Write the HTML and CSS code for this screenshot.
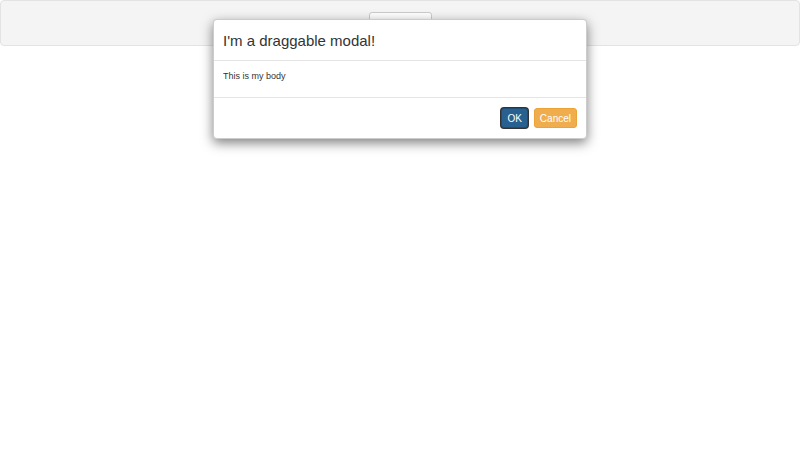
FILE: index.html
```html
<!DOCTYPE html>
<html lang="en">
<head>
    <meta charset="UTF-8">
    <meta name="viewport" content="width=device-width, initial-scale=1.0">
    <title>Draggable modal</title>
    <link rel="stylesheet" href="styles.css">
</head>
<body>
    <div class="navbar">
        <button type="button" class="btn-open">Open</button>
    </div>

    <div class="modal" id="modal">
        <div class="modal-header">
            <h4 class="modal-title">I'm a draggable modal!</h4>
        </div>
        <div class="modal-body">
            <p>This is my body</p>
        </div>
        <div class="modal-footer">
            <button type="button" class="btn btn-primary">OK</button>
            <button type="button" class="btn btn-warning">Cancel</button>
        </div>
    </div>
</body>
</html>
```

FILE: styles.css
```css
* {
    box-sizing: border-box;
}

body {
    margin: 0;
    font-family: "Liberation Sans", Arial, sans-serif;
    font-size: 11px;
    line-height: 1.42857;
    color: #333;
    background: #fff;
}

.navbar {
    height: 46px;
    background-color: #f4f4f4;
    border: 1px solid #e3e3e3;
    border-radius: 4px;
    display: flex;
    justify-content: center;
    padding-top: 11px;
}

.btn-open {
    width: 63px;
    height: 30px;
    background: #fff;
    border: 1px solid #ccc;
    border-radius: 3px;
    color: #fff;
    font-family: inherit;
    font-size: 11px;
}

.modal {
    position: absolute;
    top: 19px;
    left: 213px;
    width: 374px;
    background: #fff;
    border: 1px solid rgba(0, 0, 0, 0.2);
    border-radius: 4px;
    box-shadow: 0 4px 12px rgba(0, 0, 0, 0.5);
}

.modal-header {
    height: 41px;
    padding: 0 9px;
    border-bottom: 1px solid #e5e5e5;
    display: flex;
    align-items: center;
}

.modal-title {
    margin: 0;
    font-size: 15px;
    font-weight: normal;
    color: #333;
    padding-top: 1px;
}

.modal-body {
    height: 36px;
    padding: 0 9px;
    display: flex;
    align-items: center;
}

.modal-body p {
    margin: 0;
    font-size: 9px;
    padding-bottom: 5px;
}

.modal-footer {
    height: 41px;
    border-top: 1px solid #e5e5e5;
    padding: 0 9px;
    display: flex;
    justify-content: flex-end;
    align-items: center;
    gap: 6px;
}

.btn {
    height: 20px;
    padding: 0 5px;
    border: 1px solid transparent;
    border-radius: 3px;
    font-family: inherit;
    font-size: 10px;
    color: #fff;
    cursor: pointer;
}

.btn-primary {
    background-color: #286090;
    border-color: #204d74;
    box-shadow: 0 0 0 1px #333;
}

.btn-warning {
    background-color: #f0ad4e;
    border-color: #eea236;
}
```
